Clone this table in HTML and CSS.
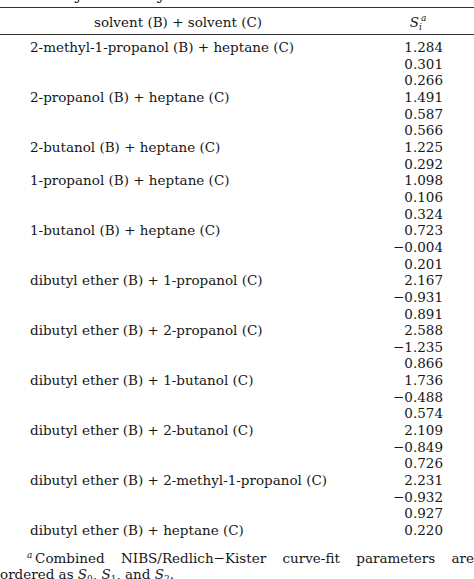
FILE: index.html
```html
<!DOCTYPE html>
<html>
<head>
<meta charset="utf-8">
<link rel="stylesheet" href="styles.css">
</head>
<body>
<div class="caption"><span class="caption-text">Solubility in Binary Solvents</span></div>
<table class="data">
  <thead>
    <tr>
      <th class="c-sys">solvent (B) + solvent (C)</th>
      <th class="c-val"><i>S</i><sub><i>i</i></sub><sup><i>a</i></sup></th>
    </tr>
  </thead>
  <tbody>
    <tr class="first"><td class="c-sys">2-methyl-1-propanol (B) + heptane (C)</td><td class="c-val">1.284</td></tr>
    <tr><td class="c-sys"></td><td class="c-val">0.301</td></tr>
    <tr><td class="c-sys"></td><td class="c-val">0.266</td></tr>
    <tr><td class="c-sys">2-propanol (B) + heptane (C)</td><td class="c-val">1.491</td></tr>
    <tr><td class="c-sys"></td><td class="c-val">0.587</td></tr>
    <tr><td class="c-sys"></td><td class="c-val">0.566</td></tr>
    <tr><td class="c-sys">2-butanol (B) + heptane (C)</td><td class="c-val">1.225</td></tr>
    <tr><td class="c-sys"></td><td class="c-val">0.292</td></tr>
    <tr><td class="c-sys">1-propanol (B) + heptane (C)</td><td class="c-val">1.098</td></tr>
    <tr><td class="c-sys"></td><td class="c-val">0.106</td></tr>
    <tr><td class="c-sys"></td><td class="c-val">0.324</td></tr>
    <tr><td class="c-sys">1-butanol (B) + heptane (C)</td><td class="c-val">0.723</td></tr>
    <tr><td class="c-sys"></td><td class="c-val">&minus;0.004</td></tr>
    <tr><td class="c-sys"></td><td class="c-val">0.201</td></tr>
    <tr><td class="c-sys">dibutyl ether (B) + 1-propanol (C)</td><td class="c-val">2.167</td></tr>
    <tr><td class="c-sys"></td><td class="c-val">&minus;0.931</td></tr>
    <tr><td class="c-sys"></td><td class="c-val">0.891</td></tr>
    <tr><td class="c-sys">dibutyl ether (B) + 2-propanol (C)</td><td class="c-val">2.588</td></tr>
    <tr><td class="c-sys"></td><td class="c-val">&minus;1.235</td></tr>
    <tr><td class="c-sys"></td><td class="c-val">0.866</td></tr>
    <tr><td class="c-sys">dibutyl ether (B) + 1-butanol (C)</td><td class="c-val">1.736</td></tr>
    <tr><td class="c-sys"></td><td class="c-val">&minus;0.488</td></tr>
    <tr><td class="c-sys"></td><td class="c-val">0.574</td></tr>
    <tr><td class="c-sys">dibutyl ether (B) + 2-butanol (C)</td><td class="c-val">2.109</td></tr>
    <tr><td class="c-sys"></td><td class="c-val">&minus;0.849</td></tr>
    <tr><td class="c-sys"></td><td class="c-val">0.726</td></tr>
    <tr><td class="c-sys">dibutyl ether (B) + 2-methyl-1-propanol (C)</td><td class="c-val">2.231</td></tr>
    <tr><td class="c-sys"></td><td class="c-val">&minus;0.932</td></tr>
    <tr><td class="c-sys"></td><td class="c-val">0.927</td></tr>
    <tr><td class="c-sys">dibutyl ether (B) + heptane (C)</td><td class="c-val">0.220</td></tr>
  </tbody>
</table>
<p class="note">
  <span class="note-line first-line"><sup><i>a</i></sup>&thinsp;Combined NIBS/Redlich&minus;Kister curve-fit parameters are</span>
  <span class="note-line">ordered as <i>S</i><sub>0</sub>, <i>S</i><sub>1</sub>, and <i>S</i><sub>2</sub>.</span>
</p>
</body>
</html>
```

FILE: styles.css
```css
html, body {
  margin: 0;
  padding: 0;
  background: #ffffff;
}

body {
  width: 474px;
  overflow: hidden;
  font-family: "DejaVu Serif", "Liberation Serif", serif;
  font-size: 13.5px;
  color: #161616;
}

.caption {
  height: 5px;
  overflow: hidden;
}

.caption-text {
  display: block;
  margin-top: -13px;
  font-weight: bold;
  font-size: 15px;
  line-height: 16px;
  white-space: nowrap;
  padding-left: 2px;
}

.data {
  width: 474px;
  border-collapse: collapse;
  margin-top: 2px;
}

.data thead tr {
  border-top: 1px solid #333;
  border-bottom: 1.5px solid #333;
}

.data th {
  font-weight: normal;
  height: 25px;
  padding: 0;
  text-align: center;
  line-height: 16px;
  padding-top: 1px;
}

.data th.c-sys {
  width: 356px;
}

.data th.c-val {
  padding-left: 6px;
}

.data th sub {
  font-size: 9px;
  vertical-align: -3px;
  line-height: 0;
}

.data th sup {
  font-size: 9px;
  vertical-align: 6px;
  line-height: 0;
  margin-left: -1px;
}

.data td {
  padding: 0;
  height: 16.66px;
  line-height: 16.66px;
  white-space: nowrap;
}

.data tr.first td {
  padding-top: 4px;
}

.data td.c-sys {
  padding-left: 30px;
  text-align: left;
}

.data td.c-val {
  text-align: right;
  padding-right: 31px;
}

.note {
  margin: 11px 0 0 0;
  line-height: 16.5px;
}

.note-line {
  display: block;
  text-align: justify;
  text-align-last: justify;
  white-space: nowrap;
}

.note-line.first-line {
  padding-left: 27px;
  white-space: normal;
}

.note-line:last-child {
  text-align-last: left;
}

.note sup {
  font-size: 9px;
  vertical-align: 5px;
  line-height: 0;
}

.note sub {
  font-size: 9px;
  vertical-align: -3px;
  line-height: 0;
}
```
